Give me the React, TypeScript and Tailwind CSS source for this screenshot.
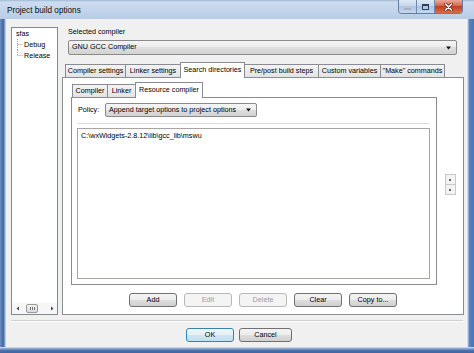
import React from "react";

const btnNormal =
  "h-[14px] flex items-center justify-center rounded-[3px] border border-[#707070] bg-[linear-gradient(to_bottom,#f4f4f4_0%,#ececec_50%,#dedede_50%,#d0d0d0_100%)] text-[#000]";
const btnDisabled =
  "h-[14px] flex items-center justify-center rounded-[3px] border border-[#b5b9bc] bg-[#f4f4f4] text-[#9a9a9a]";
const btnDefault =
  "h-[14px] flex items-center justify-center rounded-[3px] border border-[#3c7fb1] bg-[linear-gradient(to_bottom,#eef7fc_0%,#e1f0f9_50%,#cfe6f5_50%,#c0def2_100%)] text-[#000]";

const tabOff =
  "h-[13px] -ml-px first:ml-0 border border-b-0 border-[#898c95] bg-[linear-gradient(to_bottom,#f3f3f3,#e3e3e3)] flex justify-center leading-[12px] whitespace-nowrap";
const tabOn =
  "relative z-10 h-[16px] -mb-px -ml-px border border-b-0 border-[#898c95] bg-white flex justify-center leading-[14px] whitespace-nowrap";

function Arrow() {
  return (
    <svg width="6" height="4" viewBox="0 0 6 4" className="block">
      <path d="M0 0.5 L5 0.5 L2.5 3.5 Z" fill="#111" />
    </svg>
  );
}

export default function App() {
  return (
    <div className="w-[474px] h-[353px] overflow-hidden flex flex-col bg-[#4a71ad] font-['Liberation_Sans',Arial,sans-serif] text-[7.2px] text-[#000]">
      {/* Title bar */}
      <div className="h-[19px] flex items-start bg-[linear-gradient(to_bottom,#9fb6d6_0px,#cddcef_2px,#c3d5ec_10px,#b8cce6_19px)]">
        <div className="pl-[7px] pt-[6px] text-[8.2px] leading-[10px] text-[#0c0c0c]">Project build options</div>
        <div className="ml-auto mr-[11px] flex h-[14px] rounded-b-[4px] border border-t-0 border-[#5f7ea8] overflow-hidden">
          <div className="w-[18px] h-full flex items-center justify-center border-r border-[#6d8bb3] bg-[linear-gradient(to_bottom,#dfe9f5,#c2d4ea_50%,#aec5e2_50%,#c4d7ee)]">
            <div className="mt-[4px] w-[7px] h-[2px] bg-[#2d3f5c] border border-[#fff]/60" />
          </div>
          <div className="w-[18px] h-full flex items-center justify-center border-r border-[#6d8bb3] bg-[linear-gradient(to_bottom,#dfe9f5,#c2d4ea_50%,#aec5e2_50%,#c4d7ee)]">
            <div className="w-[7px] h-[6px] border border-[#2d3f5c] border-t-2" />
          </div>
          <div className="w-[27px] h-full flex items-center justify-center bg-[linear-gradient(to_bottom,#e9a99a,#d4664f_45%,#c43f22_50%,#d96b48)]">
            <svg width="9" height="8" viewBox="0 0 9 8">
              <path d="M1.5 1 L7.5 7 M7.5 1 L1.5 7" stroke="#5a1a10" strokeWidth="3" strokeLinecap="round" />
              <path d="M1.5 1 L7.5 7 M7.5 1 L1.5 7" stroke="#fff" strokeWidth="1.6" strokeLinecap="round" />
            </svg>
          </div>
        </div>
      </div>

      {/* Body */}
      <div className="flex-1 flex">
        <div className="w-[6px] bg-[linear-gradient(to_right,#6f90c2_0%,#3d65a2_55%,#9fb4d2_85%,#e6ebf2_100%)]" />
        <div className="flex-1 bg-[#f0f0f0] flex flex-col pt-[8px]">
          {/* main row */}
          <div className="h-[288px] flex pl-[5px] pr-[2px] gap-[4px]">
            {/* Tree */}
            <div className="w-[47px] border border-[#828790] bg-white flex flex-col">
              <div className="h-[11px] pl-[4px] leading-[11px]">sfas</div>
              <div className="h-[11px] flex">
                <div className="w-[12px] pl-[5px]">
                  <svg width="7" height="11" viewBox="0 0 7 11" className="block">
                    <path d="M0.5 0 V11 M0.5 5.5 H6" stroke="#a0a0a0" strokeDasharray="1 1" />
                  </svg>
                </div>
                <div className="leading-[11px]">Debug</div>
              </div>
              <div className="h-[11px] flex">
                <div className="w-[12px] pl-[5px]">
                  <svg width="7" height="11" viewBox="0 0 7 11" className="block">
                    <path d="M0.5 0 V5.5 M0.5 5.5 H6" stroke="#a0a0a0" strokeDasharray="1 1" />
                  </svg>
                </div>
                <div className="leading-[11px]">Release</div>
              </div>
              <div className="mt-auto h-[11px] bg-[#f6f6f6] flex items-center">
                <div className="w-[11px] flex justify-center">
                  <svg width="4" height="5" viewBox="0 0 4 5"><path d="M3 0.5 V4.5 L0.5 2.5 Z" fill="#444" /></svg>
                </div>
                <div className="ml-[3px] w-[12px] h-[9px] rounded-[2px] border border-[#9a9a9a] bg-[linear-gradient(to_bottom,#f2f2f2,#dcdcdc)] flex items-center justify-center gap-[1px]">
                  <div className="w-px h-[3px] bg-[#777]" />
                  <div className="w-px h-[3px] bg-[#777]" />
                  <div className="w-px h-[3px] bg-[#777]" />
                </div>
                <div className="ml-auto w-[11px] flex justify-center">
                  <svg width="4" height="5" viewBox="0 0 4 5"><path d="M1 0.5 V4.5 L3.5 2.5 Z" fill="#444" /></svg>
                </div>
              </div>
            </div>

            {/* Right section */}
            <div className="flex-1 flex flex-col">
              <div className="h-[13px] pl-[6px] leading-[9px]">Selected compiler</div>
              <div className="ml-[6px] mr-[7px] h-[15px] rounded-[2px] border border-[#8a8a8a] bg-[linear-gradient(to_bottom,#f4f4f4_0%,#ececec_50%,#dedede_50%,#d3d3d3_100%)] flex items-center pl-[3px] pr-[4px]">
                <span>GNU GCC Compiler</span>
                <span className="ml-auto"><Arrow /></span>
              </div>
              {/* outer tabs */}
              <div className="mt-[7px] h-[15px] flex items-end pl-[3px]">
                <div className={tabOff + " w-[61px]"}>Compiler settings</div>
                <div className={tabOff + " w-[56px]"}>Linker settings</div>
                <div className={tabOn + " w-[65px]"}>Search directories</div>
                <div className={tabOff + " w-[75px]"}>Pre/post build steps</div>
                <div className={tabOff + " w-[63px]"}>Custom variables</div>
                <div className={tabOff + " w-[65px]"}>"Make" commands</div>
              </div>
              {/* outer panel */}
              <div className="flex-1 border border-[#898c95] bg-white flex flex-col pl-[8px] pt-[4px]">
                <div className="flex h-[203px]">
                  {/* inner notebook */}
                  <div className="w-[366px] flex flex-col">
                    <div className="h-[15px] flex items-end pl-[1px]">
                      <div className={tabOff + " w-[36px]"}>Compiler</div>
                      <div className={tabOff + " w-[29px]"}>Linker</div>
                      <div className={tabOn + " w-[68px]"}>Resource compiler</div>
                    </div>
                    <div className="flex-1 border border-[#898c95] bg-white flex flex-col pl-[5px] pr-[6px] pt-[5px]">
                      <div className="h-[14px] flex items-center">
                        <div className="w-[28px] pl-[1px]">Policy:</div>
                        <div className="w-[152px] h-[14px] rounded-[2px] border border-[#8a8a8a] bg-[linear-gradient(to_bottom,#f4f4f4_0%,#ececec_50%,#dedede_50%,#d3d3d3_100%)] flex items-center pl-[3px] pr-[4px]">
                          <span className="whitespace-nowrap">Append target options to project options</span>
                          <span className="ml-auto"><Arrow /></span>
                        </div>
                      </div>
                      <div className="mt-[6px] mx-[1px] h-px bg-[#dadada]" />
                      <div className="mt-[4px] h-[151px] border border-[#a5a5a5] bg-white pl-[3px] pt-[2px] leading-[10px] whitespace-nowrap">
                        C:\wxWidgets-2.8.12\lib\gcc_lib\mswu
                      </div>
                    </div>
                  </div>
                  {/* spin buttons */}
                  <div className="flex-1 flex flex-col items-center justify-center pt-[2px]">
                    <div className="w-[11px] h-[11px] border border-[#c8c8c8] bg-[#f3f3f3] flex items-center justify-center">
                      <div className="w-[2px] h-[2px] bg-[#666]" />
                    </div>
                    <div className="w-[11px] h-[11px] -mt-px border border-[#c8c8c8] bg-[#f3f3f3] flex items-center justify-center">
                      <div className="w-[2px] h-[2px] bg-[#666]" />
                    </div>
                  </div>
                </div>
                {/* buttons */}
                <div className="mt-[8px] pr-[8px] flex justify-center gap-[7px]">
                  <div className={btnNormal + " w-[48px]"}>Add</div>
                  <div className={btnDisabled + " w-[48px]"}>Edit</div>
                  <div className={btnDisabled + " w-[48px]"}>Delete</div>
                  <div className={btnNormal + " w-[48px]"}>Clear</div>
                  <div className={btnNormal + " w-[48px]"}>Copy to...</div>
                </div>
              </div>
            </div>
          </div>

          {/* separator */}
          <div className="mt-[5px] ml-[5px] mr-[3px] h-[2px] border-t border-[#cfcfcf] border-b border-b-white" />

          {/* OK / Cancel */}
          <div className="mt-[6px] pl-[180px] flex gap-[5px]">
            <div className={btnDefault + " w-[48px]"}>OK</div>
            <div className={btnNormal + " w-[53px]"}>Cancel</div>
          </div>
        </div>
        <div className="w-[8px] bg-[linear-gradient(to_right,#f4f6f9_0%,#f4f6f9_12%,#a9bedb_25%,#5680bf_45%,#4a74b4_100%)]" />
      </div>
      <div className="h-[6px] bg-[linear-gradient(to_bottom,#e6ebf2_0%,#8ea8cf_25%,#4a71ad_60%,#3f64a0_100%)]" />
    </div>
  );
}
